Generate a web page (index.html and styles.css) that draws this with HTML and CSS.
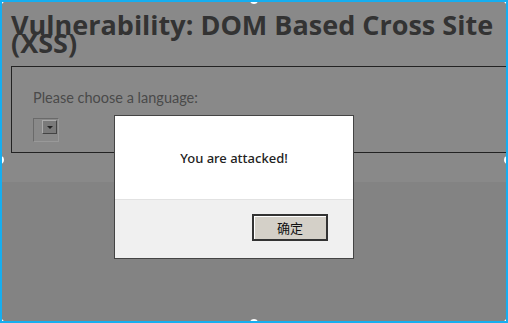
FILE: index.html
```html
<!DOCTYPE html>
<html lang="en">
<head>
    <meta charset="UTF-8">
    <title>Vulnerability: DOM Based Cross Site Scripting (XSS)</title>
    <link rel="stylesheet" href="styles.css">
</head>
<body>
    <div class="frame">
        <div class="page">
            <h1>Vulnerability: DOM Based Cross Site (XSS)</h1>
            <div class="vulnerable-code">
                <p>Please choose a language:</p>
                <div class="select">
                    <span class="select-arrow"></span>
                </div>
            </div>
        </div>
        <div class="page-lower"></div>

        <!-- alert dialog -->
        <div class="dialog">
            <div class="dialog-body">You are attacked!</div>
            <div class="dialog-footer">
                <button class="dialog-button">确定</button>
            </div>
        </div>

        <!-- selection handles -->
        <span class="handle h-tl"></span>
        <span class="handle h-tm"></span>
        <span class="handle h-tr"></span>
        <span class="handle h-ml"></span>
        <span class="handle h-mr"></span>
        <span class="handle h-bl"></span>
        <span class="handle h-bm"></span>
        <span class="handle h-br"></span>
    </div>
</body>
</html>
```

FILE: styles.css
```css
body {
    margin: 0;
    font-family: 'Open Sans', 'Noto Sans', sans-serif;
    background: #ffffff;
}
.frame {
    position: relative;
    width: 508px;
    height: 323px;
    box-sizing: border-box;
    border: 2px solid #16aef0;
    background-color: #838383;
    overflow: hidden;
    display: flex;
    flex-direction: column;
}
.page {
    background-color: #898989;
    height: 180px;
    padding: 14px 0 0 9px;
    box-sizing: border-box;
}
h1 {
    margin: 0;
    font-size: 27px;
    line-height: 18px;
    font-weight: 700;
    color: #333;
    width: 500px;
}
.vulnerable-code {
    margin-top: 14px;
    width: 520px;
    height: 87px;
    box-sizing: border-box;
    border: 1px solid #222;
    padding: 22px 21px 0 21px;
}
.vulnerable-code p {
    margin: 0;
    font-family: 'Lato', sans-serif;
    font-size: 14.5px;
    color: #4a4a4a;
}
.select {
    margin-top: 12px;
    width: 22px;
    height: 20px;
    border: 1px solid #6a6a6a;
    border-right-color: #999;
    border-bottom-color: #999;
    display: flex;
    justify-content: flex-end;
    align-items: flex-start;
    padding: 1px;
}
.select-arrow {
    width: 15px;
    height: 14px;
    background: #7a7a7a;
    border: 1px solid #444;
    border-top-color: #aaa;
    border-left-color: #aaa;
    box-sizing: border-box;
    position: relative;
}
.select-arrow::after {
    content: '';
    position: absolute;
    left: 4px;
    top: 5px;
    border-left: 3px solid transparent;
    border-right: 3px solid transparent;
    border-top: 3px solid #222;
}
.dialog {
    position: absolute;
    left: 112px;
    top: 113px;
    width: 240px;
    height: 144px;
    box-sizing: border-box;
    border: 1px solid #444;
    background: #f0f0f0;
    display: flex;
    flex-direction: column;
}
.dialog-body {
    height: 84px;
    background: #fff;
    border-bottom: 1px solid #e2e2e2;
    box-sizing: border-box;
    display: flex;
    align-items: center;
    justify-content: center;
    font-family: 'Noto Sans', sans-serif;
    font-size: 13px;
    font-weight: 500;
    color: #222;
}
.dialog-footer {
    display: flex;
    justify-content: flex-end;
    padding: 14px 25px 0 0;
}
.dialog-button {
    width: 76px;
    height: 27px;
    background: #d4d0c8;
    border: 2px solid #333;
    box-shadow: inset 1px 1px 0 #fff;
    font-family: 'Noto Sans CJK SC', sans-serif;
    font-size: 13px;
    color: #111;
    padding: 0;
}
.handle {
    position: absolute;
    width: 8px;
    height: 8px;
    border-radius: 50%;
    background: #fff;
}
.h-tl { left: -6px; top: -6px; }
.h-tm { left: 248px; top: -6px; }
.h-tr { right: -6px; top: -6px; }
.h-ml { left: -6px; top: 154px; }
.h-mr { right: -6px; top: 154px; }
.h-bl { left: -6px; bottom: -6px; }
.h-bm { left: 248px; bottom: -6px; }
.h-br { right: -6px; bottom: -6px; }
```
